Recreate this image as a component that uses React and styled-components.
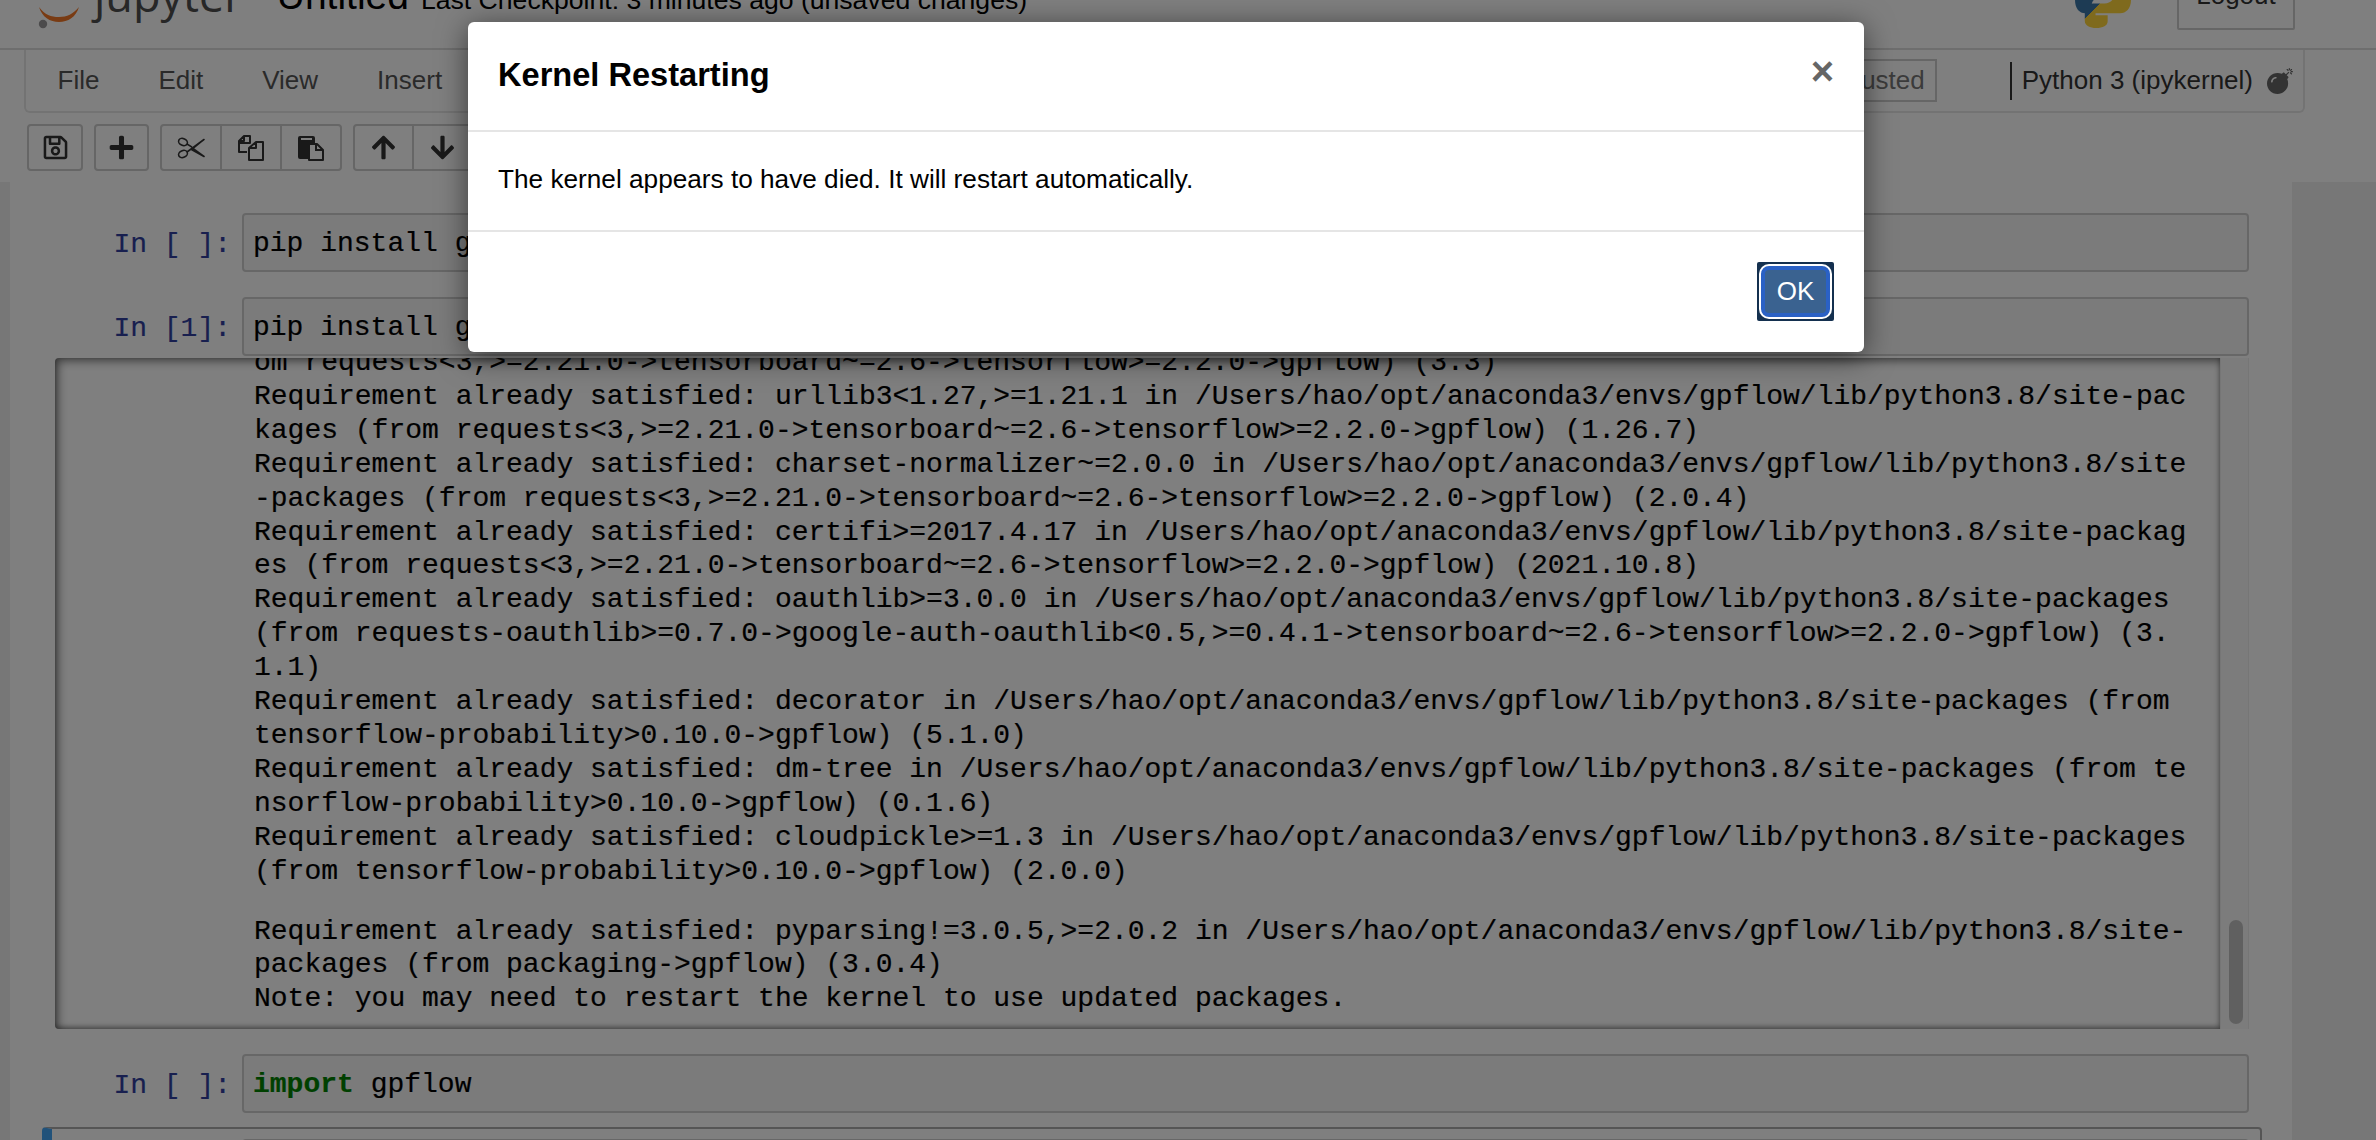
import React from "react";
import styled, { createGlobalStyle } from "styled-components";
import { FaPlus, FaArrowUp, FaArrowDown, FaBomb, FaRegSave } from "react-icons/fa";

const GlobalStyle = createGlobalStyle`
  html, body {
    margin: 0;
    height: 100%;
    overflow: hidden;
    background: #eee;
    font-family: "Liberation Sans", Arial, sans-serif;
  }
`;

const Page = styled.div`
  position: relative;
  width: 2376px;
  height: 1140px;
  overflow: hidden;
  background: #eee;
  display: flex;
  flex-direction: column;
`;

const TopBlock = styled.div`
  flex: none;
  height: 182px;
  background: #fff;
  display: flex;
  flex-direction: column;
`;

const Header = styled.header`
  flex: none;
  height: 50px;
  box-sizing: border-box;
  display: flex;
  align-items: flex-end;
  overflow: hidden;
  border-bottom: 2px solid #ddd;
  padding: 0 81px 19px 38px;
`;

const LogoMark = styled.svg`
  flex: none;
  width: 42px;
  height: 30px;
  margin-bottom: -2px;
`;

const LogoText = styled.span`
  font-family: "Open Sans", sans-serif;
  font-size: 45px;
  line-height: 46px;
  color: #4e4e4e;
  margin: 0 0 11px 14px;
`;

const NotebookName = styled.span`
  font-size: 39px;
  line-height: 40px;
  color: #000;
  margin: 0 0 13px 34px;
`;

const Checkpoint = styled.span`
  font-size: 26.6px;
  line-height: 30px;
  color: #000;
  margin: 0 0 14px 12px;
`;

const Spacer = styled.div`
  flex: 1;
`;

const PythonLogo = styled.svg`
  flex: none;
  width: 56px;
  height: 56px;
  margin-bottom: 1px;
`;

const Logout = styled.div`
  flex: none;
  width: 118px;
  height: 60px;
  box-sizing: border-box;
  border: 2px solid #ccc;
  border-radius: 2px;
  margin: 0 0 -1px 46px;
  color: #333;
  font-size: 26px;
  line-height: 46px;
  text-align: center;
`;

const MenuBar = styled.nav`
  flex: none;
  margin: 0 71px 0 24px;
  height: 63px;
  box-sizing: border-box;
  border: 2px solid #e7e7e7;
  border-top: none;
  border-radius: 0 0 6px 6px;
  display: flex;
  align-items: center;
  padding: 0 10px 0 2px;
`;

const MenuItem = styled.span`
  padding: 0 29.5px;
  font-size: 26px;
  color: #555;
`;

const Trusted = styled.span`
  margin-left: auto;
  height: 43px;
  box-sizing: border-box;
  border: 2px solid #ccc;
  padding: 0 10px;
  font-size: 26px;
  line-height: 39px;
  color: #777;
`;

const KernelName = styled.span`
  margin-left: 73px;
  height: 38px;
  border-left: 2px solid #333;
  padding-left: 10px;
  font-size: 26px;
  line-height: 36px;
  color: #333;
`;

const KernelIcon = styled.span`
  display: flex;
  margin-left: 14px;
  font-size: 26px;
  color: #666;
`;

const ToolBar = styled.div`
  flex: none;
  display: flex;
  gap: 11px;
  margin: 11px 0 0 27px;
`;

const BtnGroup = styled.div`
  display: flex;
  height: 47px;
  box-sizing: border-box;
  border: 2px solid #ccc;
  border-radius: 4px;
`;

const ToolBtn = styled.div`
  width: ${(p) => p.$w || 58}px;
  display: flex;
  align-items: center;
  justify-content: center;
  color: #333;
  font-size: 27px;
  & + & {
    border-left: 2px solid #ccc;
  }
`;

const Body = styled.div`
  flex: 1;
  min-height: 0;
  padding: 0 84px 0 10px;
  display: flex;
`;

const Notebook = styled.main`
  flex: 1;
  background: #fff;
  padding-top: 31px;
  overflow: hidden;
`;

const Cell = styled.section`
  margin: 0 30px 25px 32px;
  padding: 0 13px;
`;

const InputRow = styled.div`
  display: flex;
`;

const Prompt = styled.div`
  flex: none;
  width: 187px;
  box-sizing: border-box;
  padding: 15px 11px 0 0;
  text-align: right;
  font-family: "Liberation Mono", monospace;
  font-size: 28px;
  line-height: 34px;
  white-space: pre;
  color: #303f9f;
  -webkit-text-stroke: 0.2px;
`;

const InputBox = styled.div`
  flex: 1;
  height: 59px;
  box-sizing: border-box;
  border: 2px solid #cfcfcf;
  border-radius: 4px;
  background: #f7f7f7;
  padding: 12px 9px;
  font-family: "Liberation Mono", monospace;
  font-size: 28px;
  line-height: 34px;
  white-space: pre;
  color: #000;
  -webkit-text-stroke: 0.2px;
`;

const Keyword = styled.span`
  font-weight: bold;
  color: #008000;
`;

const OutputArea = styled.div`
  display: flex;
  height: 671px;
  margin-top: 2px;
`;

const OutputScroll = styled.div`
  flex: 1;
  min-width: 0;
  overflow: hidden;
  background: #fff;
  border-radius: 4px 0 0 4px;
  box-shadow: inset 3px 3px 10px rgba(0, 0, 0, 0.5), inset 0 -2px 5px rgba(0, 0, 0, 0.35);
  padding-left: 199px;
`;

const OutputText = styled.pre`
  margin: 0;
  font-family: "Liberation Mono", monospace;
  font-size: 28px;
  line-height: 33.9px;
  color: #000;
  -webkit-text-stroke: 0.2px;
  &:first-child {
    margin-top: -12px;
  }
  & + & {
    margin-top: 26px;
  }
`;

const ScrollTrack = styled.div`
  flex: none;
  width: 29px;
  box-sizing: border-box;
  padding: 562px 5px 0 8px;
  background: #f8f8f8;
  border-left: 1px solid #ececec;
  border-right: 1px solid #ececec;
`;

const ScrollThumb = styled.div`
  height: 104px;
  border-radius: 8px;
  background: #c1c1c1;
`;

const SelectedCell = styled.section`
  margin: -11px 30px 0 32px;
  height: 60px;
  box-sizing: border-box;
  border: 2px solid #ababab;
  border-left: 10px solid #42a5f5;
  border-radius: 4px 4px 0 0;
  padding: 10px 11px 0 3px;
`;

const Overlay = styled.div`
  position: absolute;
  inset: 0;
  background: rgba(0, 0, 0, 0.5);
  display: flex;
  justify-content: center;
  align-items: flex-start;
  padding: 22px 44px 0 0;
  box-sizing: border-box;
`;

const Dialog = styled.div`
  width: 1396px;
  height: 330px;
  background: #fff;
  border-radius: 6px;
  box-shadow: 0 5px 30px rgba(0, 0, 0, 0.55);
  display: flex;
  flex-direction: column;
`;

const DialogHeader = styled.div`
  flex: none;
  height: 108px;
  box-sizing: content-box;
  border-bottom: 2px solid #e5e5e5;
  display: flex;
  align-items: flex-start;
  justify-content: space-between;
  padding: 0 30px;
`;

const DialogTitle = styled.h4`
  margin: 0;
  padding-top: 33px;
  font-size: 32.6px;
  line-height: 40px;
  font-weight: bold;
  color: #000;
`;

const CloseBtn = styled.span`
  font-size: 40px;
  line-height: 42px;
  padding: 28px 0 0;
  font-weight: bold;
  color: #666;
`;

const DialogBody = styled.div`
  flex: none;
  height: 100px;
  border-bottom: 2px solid #e5e5e5;
  padding: 30px 30px 0;
  box-sizing: border-box;
  font-size: 26.2px;
  line-height: 34px;
  color: #000;
`;

const DialogFooter = styled.div`
  flex: 1;
  display: flex;
  justify-content: flex-end;
  align-items: flex-start;
  padding: 30px 30px 0;
`;

const FocusFrame = styled.div`
  background: #14304f;
  border-radius: 2px;
  padding: 4px;
`;

const OkBtn = styled.div`
  width: 69px;
  height: 51px;
  box-sizing: border-box;
  border: 4px solid #2a61c5;
  border-radius: 8px;
  box-shadow: 0 0 0 2px #fff;
  background: #3a6290;
  color: #fff;
  font-size: 26px;
  line-height: 43px;
  text-align: center;
`;

const ScissorsIcon = () => (
  <svg width="28" height="24" viewBox="0 0 28 24" fill="none" stroke="currentColor" strokeWidth="1.6">
    <ellipse cx="6" cy="6" rx="4.6" ry="3.4" transform="rotate(25 6 6)" />
    <ellipse cx="6" cy="18" rx="4.6" ry="3.4" transform="rotate(-25 6 18)" />
    <path d="M10 8l5 3.2M10 16L27 3.500 16 12.500 27 20.500 14 13.200" strokeLinejoin="round" />
  </svg>
);

const CopyIcon = () => (
  <svg width="28" height="26" viewBox="0 0 28 26" fill="none" stroke="currentColor" strokeWidth="2" strokeLinejoin="round">
    <path d="M7 1h6v7H2v-2zM7 1v5H2M2 8v9h8" />
    <path d="M19 7h7v18H12V13zM19 7v6h-7" fill="#fff" />
  </svg>
);

const PasteIcon = () => (
  <svg width="28" height="26" viewBox="0 0 28 26">
    <rect x="1" y="1" width="17" height="23" rx="2" fill="currentColor" />
    <rect x="4" y="3" width="11" height="2" fill="#fff" />
    <path d="M19 9h1l6 6v10H12V9z" fill="#fff" stroke="currentColor" strokeWidth="2" strokeLinejoin="round" />
    <path d="M19 9v6h7" fill="none" stroke="currentColor" strokeWidth="2" />
  </svg>
);

const lines1 = [
  "om requests<3,>=2.21.0->tensorboard~=2.6->tensorflow>=2.2.0->gpflow) (3.3)",
  "Requirement already satisfied: urllib3<1.27,>=1.21.1 in /Users/hao/opt/anaconda3/envs/gpflow/lib/python3.8/site-pac",
  "kages (from requests<3,>=2.21.0->tensorboard~=2.6->tensorflow>=2.2.0->gpflow) (1.26.7)",
  "Requirement already satisfied: charset-normalizer~=2.0.0 in /Users/hao/opt/anaconda3/envs/gpflow/lib/python3.8/site",
  "-packages (from requests<3,>=2.21.0->tensorboard~=2.6->tensorflow>=2.2.0->gpflow) (2.0.4)",
  "Requirement already satisfied: certifi>=2017.4.17 in /Users/hao/opt/anaconda3/envs/gpflow/lib/python3.8/site-packag",
  "es (from requests<3,>=2.21.0->tensorboard~=2.6->tensorflow>=2.2.0->gpflow) (2021.10.8)",
  "Requirement already satisfied: oauthlib>=3.0.0 in /Users/hao/opt/anaconda3/envs/gpflow/lib/python3.8/site-packages",
  "(from requests-oauthlib>=0.7.0->google-auth-oauthlib<0.5,>=0.4.1->tensorboard~=2.6->tensorflow>=2.2.0->gpflow) (3.",
  "1.1)",
  "Requirement already satisfied: decorator in /Users/hao/opt/anaconda3/envs/gpflow/lib/python3.8/site-packages (from",
  "tensorflow-probability>0.10.0->gpflow) (5.1.0)",
  "Requirement already satisfied: dm-tree in /Users/hao/opt/anaconda3/envs/gpflow/lib/python3.8/site-packages (from te",
  "nsorflow-probability>0.10.0->gpflow) (0.1.6)",
  "Requirement already satisfied: cloudpickle>=1.3 in /Users/hao/opt/anaconda3/envs/gpflow/lib/python3.8/site-packages",
  "(from tensorflow-probability>0.10.0->gpflow) (2.0.0)",
];

const lines2 = [
  "Requirement already satisfied: pyparsing!=3.0.5,>=2.0.2 in /Users/hao/opt/anaconda3/envs/gpflow/lib/python3.8/site-",
  "packages (from packaging->gpflow) (3.0.4)",
  "Note: you may need to restart the kernel to use updated packages.",
];

const menu = ["File", "Edit", "View", "Insert", "Cell", "Kernel", "Widgets", "Help"];

function App() {
  return (
    <Page>
      <GlobalStyle />
      <TopBlock>
        <Header>
          <LogoMark viewBox="0 0 42 30">
            <path d="M1 6c6 8 12 10 20 10s14-3 20-10c-3 10-11 15-20 15S4 16 1 6z" fill="#f37726" />
            <circle cx="5" cy="23" r="4.2" fill="#989798" />
          </LogoMark>
          <LogoText>jupyter</LogoText>
          <NotebookName>Untitled</NotebookName>
          <Checkpoint>Last Checkpoint: 3 minutes ago (unsaved changes)</Checkpoint>
          <Spacer />
          <PythonLogo viewBox="0 0 24 24">
            <defs>
              <linearGradient id="py" x1="0" y1="0" x2="1" y2="1">
                <stop offset="0.5" stopColor="#3b77a8" />
                <stop offset="0.5" stopColor="#ffd43b" />
              </linearGradient>
            </defs>
            <path
              fill="url(#py)"
              d="M12 0C9 0 7 .8 7 3v2.500h5.200v.8H4.600C2 6.300 0 8.300 0 12s2 5.700 4.300 5.700H7v-3c0-2.300 2-4.200 4.300-4.200h5c2 0 3.500-1.600 3.500-3.500V3c0-2-2-3-4.800-3zM17 6.500V9.300c0 2.400-2 4.200-4.300 4.200h-5C5.700 13.500 4.200 15 4.200 17v4c0 2 2.300 3 4.800 3 3 0 5-.9 5-3v-2.500H8.800v-.8h10.600c2.400 0 4.600-2 4.600-5.700s-2-5.700-4.600-5.700H17z"
            />
            <circle cx="15.500" cy="21" r="1" fill="#fff" />
          </PythonLogo>
          <Logout>Logout</Logout>
        </Header>
        <MenuBar>
          {menu.map((m) => (
            <MenuItem key={m}>{m}</MenuItem>
          ))}
          <Trusted>Trusted</Trusted>
          <KernelName>Python 3 (ipykernel)</KernelName>
          <KernelIcon>
            <FaBomb />
          </KernelIcon>
        </MenuBar>
        <ToolBar>
          <BtnGroup>
            <ToolBtn $w={52}>
              <FaRegSave />
            </ToolBtn>
          </BtnGroup>
          <BtnGroup>
            <ToolBtn $w={51}>
              <FaPlus />
            </ToolBtn>
          </BtnGroup>
          <BtnGroup>
            <ToolBtn>
              <ScissorsIcon />
            </ToolBtn>
            <ToolBtn>
              <CopyIcon />
            </ToolBtn>
            <ToolBtn>
              <PasteIcon />
            </ToolBtn>
          </BtnGroup>
          <BtnGroup>
            <ToolBtn $w={57}>
              <FaArrowUp />
            </ToolBtn>
            <ToolBtn $w={57}>
              <FaArrowDown />
            </ToolBtn>
          </BtnGroup>
        </ToolBar>
      </TopBlock>
      <Body>
        <Notebook>
          <Cell>
            <InputRow>
              <Prompt>In [ ]:</Prompt>
              <InputBox>pip install gpflow</InputBox>
            </InputRow>
          </Cell>
          <Cell>
            <InputRow>
              <Prompt>In [1]:</Prompt>
              <InputBox>pip install gpflow</InputBox>
            </InputRow>
            <OutputArea>
              <OutputScroll>
                <OutputText>{lines1.join("\n")}</OutputText>
                <OutputText>{lines2.join("\n")}</OutputText>
              </OutputScroll>
              <ScrollTrack>
                <ScrollThumb />
              </ScrollTrack>
            </OutputArea>
          </Cell>
          <Cell>
            <InputRow>
              <Prompt>In [ ]:</Prompt>
              <InputBox>
                <Keyword>import</Keyword> gpflow
              </InputBox>
            </InputRow>
          </Cell>
          <SelectedCell>
            <InputRow>
              <Prompt>In [ ]:</Prompt>
              <InputBox />
            </InputRow>
          </SelectedCell>
        </Notebook>
      </Body>
      <Overlay>
        <Dialog>
          <DialogHeader>
            <DialogTitle>Kernel Restarting</DialogTitle>
            <CloseBtn>×</CloseBtn>
          </DialogHeader>
          <DialogBody>The kernel appears to have died. It will restart automatically.</DialogBody>
          <DialogFooter>
            <FocusFrame>
              <OkBtn>OK</OkBtn>
            </FocusFrame>
          </DialogFooter>
        </Dialog>
      </Overlay>
    </Page>
  );
}

export default App;
